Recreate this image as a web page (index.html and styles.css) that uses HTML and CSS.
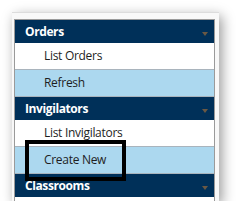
FILE: index.html
```html
<!DOCTYPE html>
<html lang="en">
<head>
    <meta charset="UTF-8">
    <title>Menu</title>
    <link rel="stylesheet" href="styles.css">
</head>
<body>

    <div class="window">
        <div class="panel">
            <!-- Orders -->
            <div class="group-header"><span>Orders</span><i class="caret"></i></div>
            <div class="item">List Orders</div>
            <div class="item selected">Refresh</div>

            <!-- Invigilators -->
            <div class="group-header"><span>Invigilators</span><i class="caret"></i></div>
            <div class="item">List Invigilators</div>
            <div class="item selected">Create New</div>

            <!-- Classrooms -->
            <div class="group-header"><span>Classrooms</span><i class="caret"></i></div>
            <div class="item"></div>

            <div class="highlight-box"></div>
        </div>
    </div>

</body>
</html>
```

FILE: styles.css
```css
body {
    margin: 0;
    background-color: #ffffff;
    font-family: "Open Sans", "Noto Sans", sans-serif;
}
.window {
    margin: 12px 0 0 12px;
    width: 201px;
    height: 182px;
    padding: 6px 4px 0 2px;
    background-color: #f8f8f8;
    border-top: 1px solid #dcdcdc;
    box-shadow: 3px 4px 12px rgba(0, 0, 0, 0.4);
    overflow: hidden;
}
.panel {
    position: relative;
    border: 1px solid #9a9a9a;
    border-bottom: none;
    background-color: white;
    height: 200px;
}
.group-header {
    display: flex;
    align-items: center;
    justify-content: space-between;
    height: 23px;
    padding: 0 6px 0 10px;
    background-color: #003059;
    color: white;
    font-size: 12px;
    font-weight: bold;
    letter-spacing: -0.4px;
}
.caret {
    width: 0;
    height: 0;
    margin-top: 4px;
    border-left: 3px solid transparent;
    border-right: 3px solid transparent;
    border-top: 4px solid #6a5844;
}
.item {
    height: 26px;
    line-height: 26px;
    padding-left: 29px;
    border-bottom: 1px solid #a9b4bd;
    color: #1e1e1e;
    font-size: 12px;
    letter-spacing: -0.3px;
}
.item.selected {
    background-color: #acd8ef;
}
.highlight-box {
    position: absolute;
    left: 10px;
    top: 120px;
    width: 93px;
    height: 33px;
    border: 4px solid black;
}
```
